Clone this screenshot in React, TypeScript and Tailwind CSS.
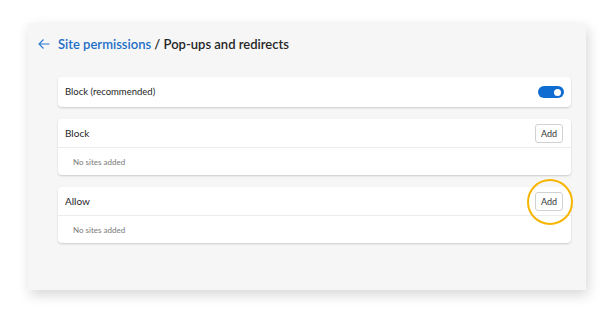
const font = { fontFamily: 'Lato, "Noto Sans", sans-serif' }

function AddButton() {
  return (
    <button className="h-[19px] w-[28px] rounded-[3px] border border-[#d1d1d1] bg-white text-[9px] leading-none text-[#333]">
      Add
    </button>
  )
}

function SiteList({ title, highlight }: { title: string; highlight?: boolean }) {
  return (
    <div className="rounded-[4px] bg-white shadow-[0_1px_2px_rgba(0,0,0,0.18)]">
      <div className="flex h-[28px] items-center justify-between pl-[7px] pr-[8px]">
        <span className="text-[10px] text-[#1f1f1f]">{title}</span>
        <div className="relative flex">
          <AddButton />
          {highlight && (
            <div className="pointer-events-none absolute left-[-8px] top-[-13px] h-[46px] w-[46px] rounded-full border-2 border-[#f7b500]" />
          )}
        </div>
      </div>
      <div className="flex h-[28px] items-center border-t border-[#ececec] pl-[15px] text-[8px] text-[#7a7a7a]">
        No sites added
      </div>
    </div>
  )
}

export default function App() {
  return (
    <div className="h-[309px] w-[604px] bg-white pl-[28px] pt-[23px]" style={font}>
      <div className="h-[267px] w-[558px] bg-[#f6f6f6] shadow-[2px_5px_12px_rgba(0,0,0,0.16)]">
        <div className="flex items-center pl-[10px] pt-[12px]">
          <svg width="12" height="10" viewBox="0 0 12 10" fill="none" stroke="#2b7bd4" strokeWidth="1.1">
            <path d="M11.5 5H1M5.5 0.5L1 5l4.5 4.5" />
          </svg>
          <h1 className="ml-[8px] text-[13px] font-semibold leading-[18px] text-[#262626]">
            <span className="text-[#1d6fc6]">Site permissions</span> / Pop-ups and redirects
          </h1>
        </div>
        <div className="mt-[24px] flex w-[513px] flex-col gap-[12px] pl-[30px] box-content">
          <div className="flex h-[30px] items-center justify-between rounded-[4px] bg-white pl-[7px] pr-[7px] shadow-[0_1px_2px_rgba(0,0,0,0.18)]">
            <span className="text-[9.5px] text-[#1f1f1f]">Block (recommended)</span>
            <div className="flex h-[12px] w-[26px] items-center justify-end rounded-full bg-[#0f6cd0] pr-[3px]">
              <div className="h-[7px] w-[7px] rounded-full bg-white" />
            </div>
          </div>
          <SiteList title="Block" />
          <SiteList title="Allow" highlight />
        </div>
      </div>
    </div>
  )
}
